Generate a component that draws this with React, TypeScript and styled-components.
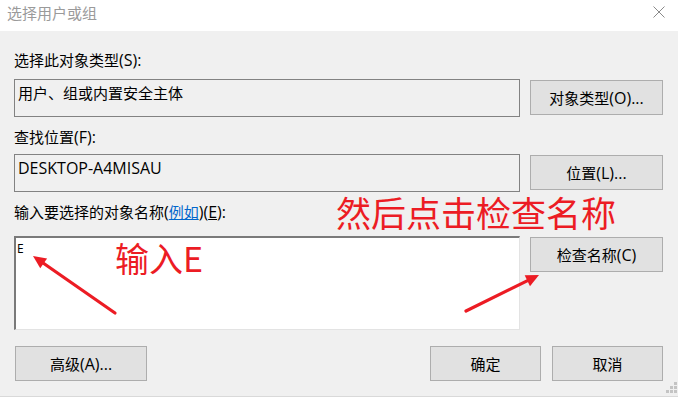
import React from "react";
import styled, { createGlobalStyle } from "styled-components";

const Global = createGlobalStyle`
  html, body { margin: 0; padding: 0; background: #f0f0f0; }
  body { font-family: "Noto Sans CJK SC", "Noto Sans", sans-serif; }
`;

const Window = styled.div`
  position: relative;
  width: 678px;
  height: 397px;
  background: #f0f0f0;
  overflow: hidden;
  box-sizing: border-box;
  border-bottom: 1px solid #d9d9d9;
  font-family: "Noto Sans CJK SC", sans-serif;
  font-size: 15px;
  color: #000;
`;

const TitleBar = styled.div`
  height: 31px;
  background: #fff;
  display: flex;
  align-items: center;
  justify-content: space-between;
  padding: 0 13px 0 7px;
  box-sizing: border-box;
`;

const Title = styled.div`
  font-size: 15px;
  color: #9a9a9a;
  line-height: 20px;
  margin-top: -5px;
`;

const CloseIcon = styled.svg`
  width: 12px;
  height: 12px;
  margin-top: -7px;
`;

const Body = styled.div`
  padding: 0 15px 0 14px;
  display: flex;
  flex-direction: column;
`;

const Label = styled.div<{ $top: number }>`
  height: 20px;
  line-height: 20px;
  margin-top: ${(p) => p.$top}px;
  white-space: nowrap;
`;

const Row = styled.div<{ $top: number }>`
  display: grid;
  grid-template-columns: 506px 133px;
  column-gap: 10px;
  align-items: start;
  margin-top: ${(p) => p.$top}px;
`;

const ReadField = styled.div`
  height: 38px;
  box-sizing: border-box;
  border: 1px solid #828282;
  background: #f0f0f0;
  padding: 3px 3px;
  line-height: 20px;
  white-space: nowrap;
`;

const InputArea = styled.div`
  height: 94px;
  box-sizing: border-box;
  background: #fff;
  border-top: 2px solid #7a7a7a;
  border-left: 2px solid #7a7a7a;
  border-right: 1px solid #e3e3e3;
  border-bottom: 1px solid #e3e3e3;
  padding: 4px 1px;
  font-size: 12px;
  line-height: 14px;
  font-family: "Open Sans", "Noto Sans", sans-serif;
`;

const Button = styled.div<{ $w?: number }>`
  height: 35px;
  width: ${(p) => (p.$w ? `${p.$w}px` : "auto")};
  box-sizing: border-box;
  border: 1px solid #adadad;
  background: #e1e1e1;
  display: flex;
  align-items: center;
  justify-content: center;
  white-space: nowrap;
  margin-top: 1px;
`;

const BottomRow = styled.div`
  display: flex;
  align-items: center;
  margin-top: 15px;
  padding-left: 1px;
`;

const Spacer = styled.div`
  flex: 1;
`;

const RightButtons = styled.div`
  display: flex;
  gap: 11px;
`;

const Link = styled.span`
  color: #0066cc;
  text-decoration: underline;
`;

const Access = styled.span`
  text-decoration: underline;
`;

const Latin = styled.span`
  font-family: "Open Sans", "Noto Sans", sans-serif;
  font-size: 16px;
`;

const RedText = styled.div<{ $x: number; $y: number; $size: number }>`
  position: absolute;
  left: ${(p) => p.$x}px;
  top: ${(p) => p.$y}px;
  font-size: ${(p) => p.$size}px;
  line-height: ${(p) => p.$size}px;
  color: #ec1c24;
  white-space: nowrap;
  font-family: "Noto Sans CJK SC", sans-serif;
`;

const Overlay = styled.svg`
  position: absolute;
  left: 0;
  top: 0;
  width: 678px;
  height: 397px;
  pointer-events: none;
`;

const Grip = styled.svg`
  position: absolute;
  right: 0;
  bottom: 2px;
  width: 12px;
  height: 12px;
`;

/** Split text into CJK and Latin runs so Latin glyphs get the UI font size. */
function T({ children }: { children: string }) {
  const parts = children.split(/([\u0000-\u024f]+)/).filter((s) => s.length > 0);
  return (
    <>
      {parts.map((p, i) =>
        /^[\u0000-\u024f]+$/.test(p) ? <Latin key={i}>{p}</Latin> : <React.Fragment key={i}>{p}</React.Fragment>
      )}
    </>
  );
}

function Arrow({ x1, y1, x2, y2 }: { x1: number; y1: number; x2: number; y2: number }) {
  const dx = x2 - x1;
  const dy = y2 - y1;
  const len = Math.hypot(dx, dy);
  const ux = dx / len;
  const uy = dy / len;
  const hl = 13;
  const hw = 6;
  const bx = x2 - ux * hl;
  const by = y2 - uy * hl;
  const px = -uy;
  const py = ux;
  return (
    <g>
      <line x1={x1} y1={y1} x2={bx + ux * 2} y2={by + uy * 2} stroke="#ec1c24" strokeWidth={3.2} strokeLinecap="round" />
      <polygon
        points={`${x2},${y2} ${bx + px * hw},${by + py * hw} ${bx - px * hw},${by - py * hw}`}
        fill="#ec1c24"
      />
    </g>
  );
}

export default function App() {
  return (
    <>
      <Global />
      <Window>
        <TitleBar>
          <Title>选择用户或组</Title>
          <CloseIcon viewBox="0 0 12 12">
            <path d="M0.5 0.5 L11.5 11.5 M11.5 0.5 L0.5 11.5" stroke="#8a8a8a" strokeWidth="1" fill="none" />
          </CloseIcon>
        </TitleBar>
        <Body>
          <Label $top={19}><T>选择此对象类型(S):</T></Label>
          <Row $top={9}>
            <ReadField>用户、组或内置安全主体</ReadField>
            <Button><T>对象类型(O)...</T></Button>
          </Row>
          <Label $top={10}><T>查找位置(F):</T></Label>
          <Row $top={7}>
            <ReadField><T>DESKTOP-A4MISAU</T></ReadField>
            <Button><T>位置(L)...</T></Button>
          </Row>
          <Label $top={10}>
            输入要选择的对象名称<Latin>(</Latin><Link>例如</Link><Latin>)(<Access>E</Access>):</Latin>
          </Label>
          <Row $top={14}>
            <InputArea>E</InputArea>
            <Button><T>检查名称(C)</T></Button>
          </Row>
          <BottomRow>
            <Button $w={132}><T>高级(A)...</T></Button>
            <Spacer />
            <RightButtons>
              <Button $w={111}>确定</Button>
              <Button $w={111}>取消</Button>
            </RightButtons>
          </BottomRow>
        </Body>
        <RedText $x={336} $y={194} $size={35}>然后点击检查名称</RedText>
        <RedText $x={115} $y={241} $size={34}>输入E</RedText>
        <Overlay viewBox="0 0 678 397">
          <Arrow x1={115} y1={313} x2={33} y2={256} />
          <Arrow x1={466} y1={311} x2={539} y2={275} />
        </Overlay>
        <Grip viewBox="0 0 12 12">
          <rect x="8" y="0" width="3" height="3" fill="#c4c4c4" />
          <rect x="4" y="4" width="3" height="3" fill="#c4c4c4" />
          <rect x="8" y="4" width="3" height="3" fill="#c4c4c4" />
          <rect x="0" y="8" width="3" height="3" fill="#c4c4c4" />
          <rect x="4" y="8" width="3" height="3" fill="#c4c4c4" />
          <rect x="8" y="8" width="3" height="3" fill="#c4c4c4" />
        </Grip>
      </Window>
    </>
  );
}
